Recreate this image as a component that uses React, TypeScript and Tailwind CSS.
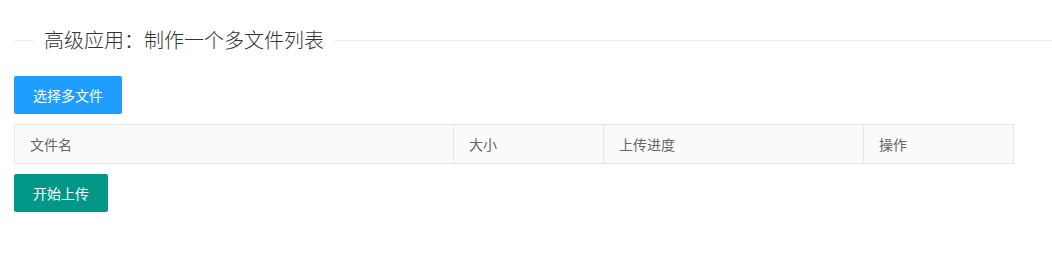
import React from 'react';

const columns = [
  { title: '文件名', width: 'w-[439px]' },
  { title: '大小', width: 'w-[150px]' },
  { title: '上传进度', width: 'w-[260px]' },
  { title: '操作', width: 'w-[150px]' },
];

const App: React.FC = () => {
  return (
    <div
      className="min-h-[259px] bg-white pl-[14px] text-[14px] text-[#333]"
      style={{ fontFamily: '"Noto Sans CJK SC", "Noto Sans", sans-serif' }}
    >
      {/* Field title */}
      <div className="flex items-center pt-[28px] h-[52px]">
        <div className="h-px w-[20px] bg-[#eee]" />
        <span className="px-[10px] text-[20px] leading-[24px] font-light text-[#333]">
          高级应用：制作一个多文件列表
        </span>
        <div className="h-px flex-1 bg-[#eee]" />
      </div>

      <button
        type="button"
        className="mt-[24px] flex h-[38px] w-[108px] items-center justify-center rounded-[2px] bg-[#1E9FFF] text-[14px] text-white"
      >
        选择多文件
      </button>

      {/* File list */}
      <table className="mt-[10px] w-[999px] table-fixed border-collapse">
        <thead>
          <tr className="bg-[#FAFAFA]">
            {columns.map((col) => (
              <th
                key={col.title}
                className={`${col.width} border border-[#e6e6e6] px-[15px] py-[9px] text-left text-[14px] font-normal leading-[20px] text-[#666]`}
              >
                {col.title}
              </th>
            ))}
          </tr>
        </thead>
        <tbody />
      </table>

      <button
        type="button"
        className="mt-[10px] flex h-[38px] w-[94px] items-center justify-center rounded-[2px] bg-[#009688] text-[14px] text-white"
      >
        开始上传
      </button>
    </div>
  );
};

export default App;
